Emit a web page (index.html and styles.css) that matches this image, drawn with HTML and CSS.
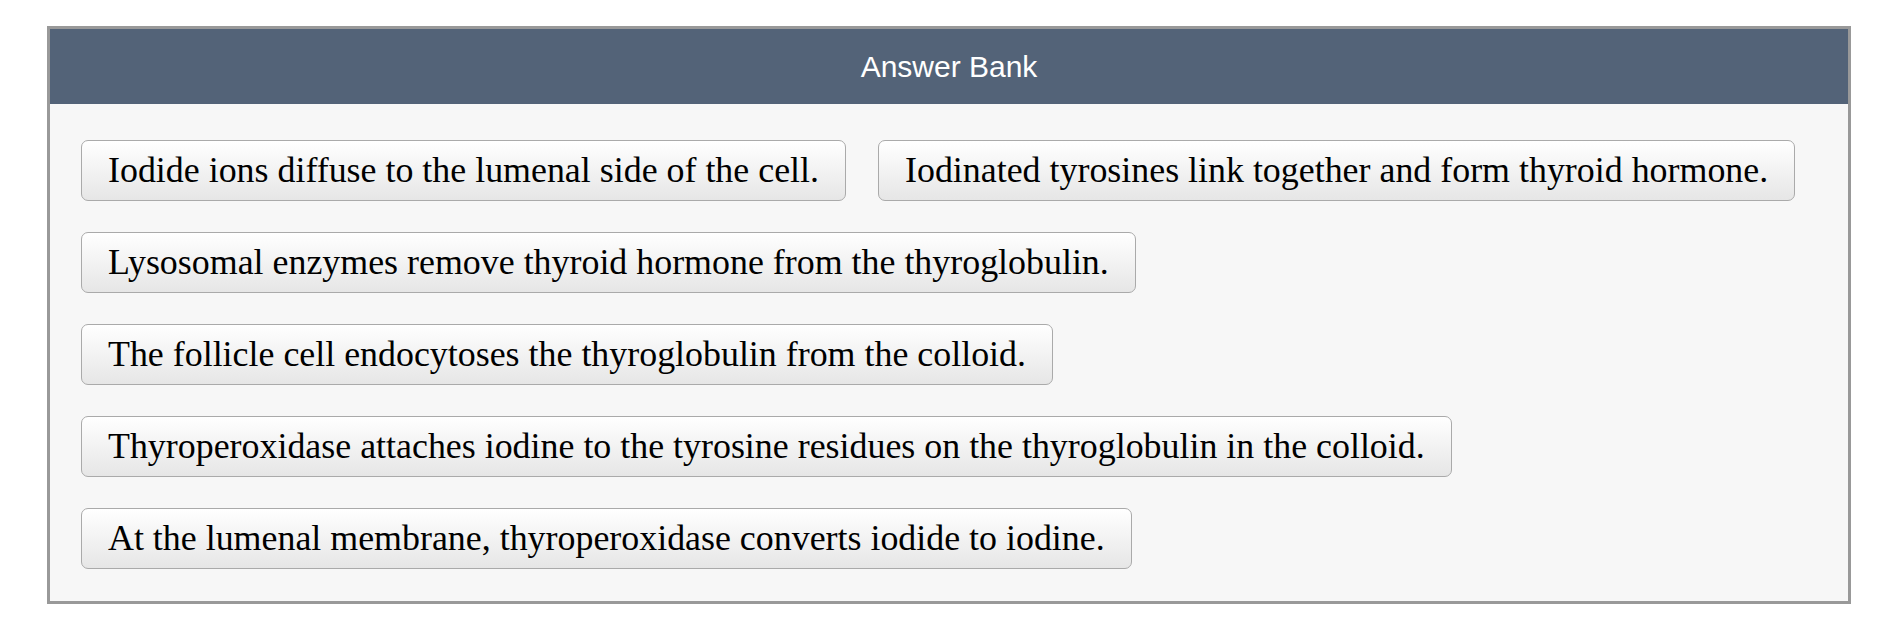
FILE: index.html
```html
<!DOCTYPE html>
<html lang="en">
<head>
    <meta charset="UTF-8">
    <meta name="viewport" content="width=device-width, initial-scale=1.0">
    <title>Answer Bank</title>
    <link rel="stylesheet" href="styles.css">
</head>
<body>
    <section class="answer-bank">
        <h2 class="answer-bank-title">Answer Bank</h2>
        <div class="answer-list">
            <button class="answer">Iodide ions diffuse to the lumenal side of the cell.</button>
            <button class="answer">Iodinated tyrosines link together and form thyroid hormone.</button>
            <button class="answer">Lysosomal enzymes remove thyroid hormone from the thyroglobulin.</button>
            <button class="answer">The follicle cell endocytoses the thyroglobulin from the colloid.</button>
            <button class="answer">Thyroperoxidase attaches iodine to the tyrosine residues on the thyroglobulin in the colloid.</button>
            <button class="answer">At the lumenal membrane, thyroperoxidase converts iodide to iodine.</button>
        </div>
    </section>
</body>
</html>
```

FILE: styles.css
```css
/* Reset and Base Styles */
* {
    margin: 0;
    padding: 0;
    box-sizing: border-box;
}

body {
    background: #ffffff;
    font-family: 'Liberation Serif', 'Times New Roman', serif;
}

/* Answer Bank */
.answer-bank {
    width: 1804px;
    margin: 26px 0 0 47px;
    border: 3px solid #999999;
    background: #f7f7f7;
}

.answer-bank-title {
    height: 75px;
    line-height: 75px;
    text-align: center;
    background: #536378;
    color: #ffffff;
    font-family: 'Liberation Sans', Arial, sans-serif;
    font-size: 30px;
    font-weight: normal;
}

.answer-list {
    display: flex;
    flex-wrap: wrap;
    align-items: flex-start;
    column-gap: 32px;
    row-gap: 31px;
    padding: 36px 20px 32px 31px;
}

.answer {
    padding: 9px 26px;
    line-height: 41px;
    font-family: 'Liberation Serif', 'Times New Roman', serif;
    font-size: 35.9px;
    color: #000000;
    background: linear-gradient(to bottom, #ffffff, #e6e6e6);
    border: 1px solid #aaaaaa;
    border-radius: 7px;
    cursor: pointer;
}
```
